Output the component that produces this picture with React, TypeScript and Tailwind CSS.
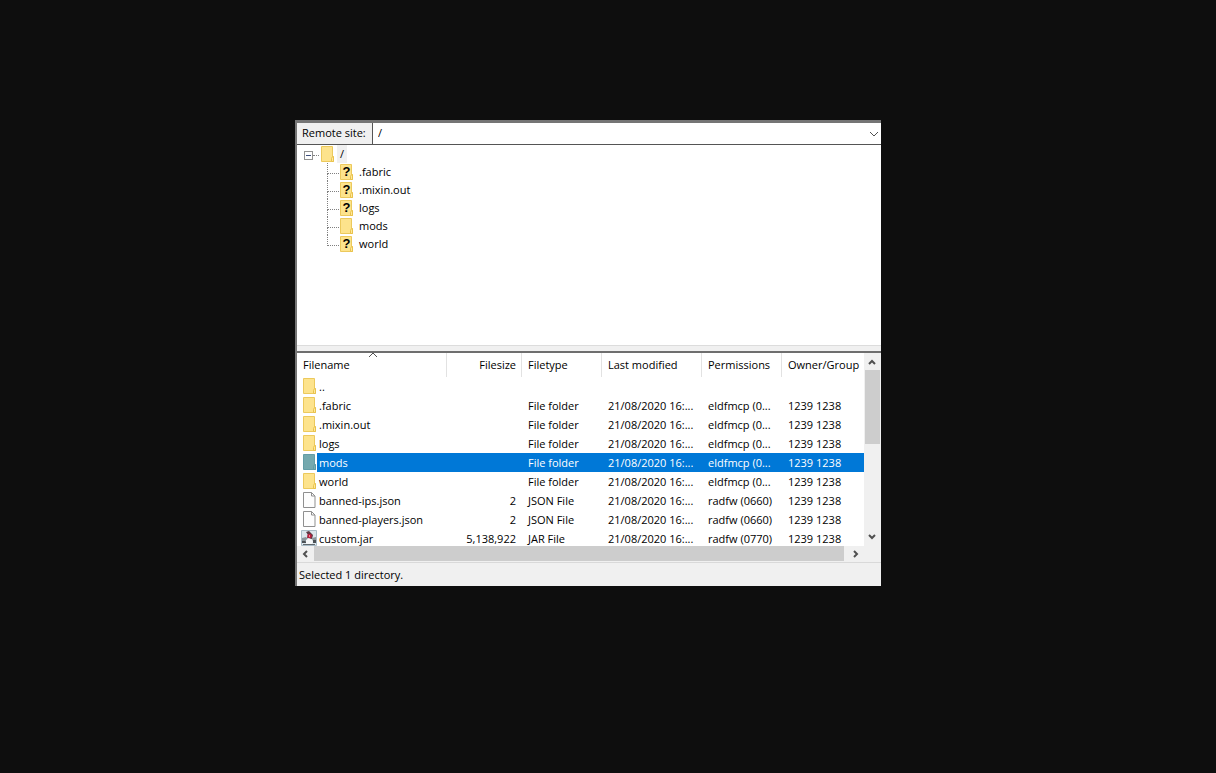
import React from "react";
import clsx from "clsx";

type IconKind = "folder" | "file" | "jar";

interface RemoteFile {
  name: string;
  icon: IconKind;
  size?: string;
  type?: string;
  modified?: string;
  permissions?: string;
  owner?: string;
}

const MODIFIED = "21/08/2020 16:...";
const OWNER = "1239 1238";

const folder = (name: string): RemoteFile => ({
  name,
  icon: "folder",
  type: "File folder",
  modified: MODIFIED,
  permissions: "eldfmcp (0...",
  owner: OWNER,
});

const files: RemoteFile[] = [
  { name: "..", icon: "folder" },
  folder(".fabric"),
  folder(".mixin.out"),
  folder("logs"),
  folder("mods"),
  folder("world"),
  { name: "banned-ips.json", icon: "file", size: "2", type: "JSON File", modified: MODIFIED, permissions: "radfw (0660)", owner: OWNER },
  { name: "banned-players.json", icon: "file", size: "2", type: "JSON File", modified: MODIFIED, permissions: "radfw (0660)", owner: OWNER },
  { name: "custom.jar", icon: "jar", size: "5,138,922", type: "JAR File", modified: MODIFIED, permissions: "radfw (0770)", owner: OWNER },
];

const tree = [
  { name: ".fabric", known: false },
  { name: ".mixin.out", known: false },
  { name: "logs", known: false },
  { name: "mods", known: true },
  { name: "world", known: false },
];

const columns = [
  { label: "Filename", width: "w-[150px]" },
  { label: "Filesize", width: "w-[75px]" },
  { label: "Filetype", width: "w-20" },
  { label: "Last modified", width: "w-[100px]" },
  { label: "Permissions", width: "w-20" },
  { label: "Owner/Group", width: "" },
];

const FolderIcon = ({ selected = false }: { selected?: boolean }) => (
  <svg width="13" height="16" viewBox="0 0 13 16" className="shrink-0" aria-hidden="true">
    <path d="M.5.5h11v9.5l1 1v4.5H.5z" fill={selected ? "#74a9ae" : "#fde38c"} stroke={selected ? "#639da6" : "#ecc95c"} />
    <path d="M12.5 10.5h-1l-1 2v3h2z" fill={selected ? "#7bb0b2" : "#ffe89a"} stroke={selected ? "#5f9aa4" : "#e9c24c"} />
  </svg>
);

const FileIcon = () => (
  <svg width="13" height="16" viewBox="0 0 13 16" className="shrink-0" aria-hidden="true">
    <path d="M.5.5h8l3.5 3.5v11.5H.5z" fill="#fdfdfd" stroke="#8f8f8f" />
    <path d="M8.5.5V4H12" fill="none" stroke="#8f8f8f" />
  </svg>
);

const JarIcon = () => (
  <svg width="16" height="16" viewBox="0 0 16 16" className="-ml-0.5 -mr-px shrink-0" aria-hidden="true">
    <path d="M.5.5h15v15H.5z" fill="#dce6ec" stroke="#a9bcc7" />
    <path d="M5 2l3-1 4 4-1 4-5-1 1-3z" fill="#5b3a45" />
    <path d="M1 8l4-1 2 2-1 3-5 1z" fill="#8b959b" />
    <path d="M11 8l4-1v6l-3-1z" fill="#8b959b" />
    <path d="M1 11h3l2 2H1zM12 10h3v3h-3z" fill="#4b5054" />
    <path d="M5 10l3-2 4 3-1 3H5z" fill="#f5f7f8" />
    <circle cx="8.5" cy="6" r="2.3" fill="#bb1f3e" />
    <path d="M8 5h1v2H8z" fill="#e98a9b" />
    <path d="M2 14h12v1H2z" fill="#60686d" />
  </svg>
);

const Arrow = ({ d, thin = false }: { d: string; thin?: boolean }) => (
  <svg width="10" height="10" viewBox="0 0 10 10" aria-hidden="true">
    <path d={d} fill="none" stroke="#505050" strokeWidth={thin ? 1 : 2} />
  </svg>
);

const RowIcon = ({ kind, selected }: { kind: IconKind; selected: boolean }) => {
  if (kind === "file") return <FileIcon />;
  if (kind === "jar") return <JarIcon />;
  return <FolderIcon selected={selected} />;
};

const AddressBar = () => (
  <div className="flex h-[22px] border-b border-[#555] bg-white">
    <label htmlFor="remote-site" className="w-[76px] border-r border-[#555] bg-[#f0f0f0] pl-[5px] leading-5 whitespace-nowrap">
      Remote site:
    </label>
    <input id="remote-site" defaultValue="/" className="min-w-0 flex-1 px-[5px] outline-none" />
    <button type="button" aria-label="Show recent paths" className="flex w-[15px] items-center justify-center">
      <Arrow d="M1 3l4 4 4-4" thin />
    </button>
  </div>
);

const DirectoryTree = () => (
  <div className="h-[201px] border-b border-[#dcdcdc] bg-white pl-[7px]">
    <div className="flex h-[18px] items-center">
      <button type="button" aria-label="Collapse" className="mt-0.5 flex size-[9px] items-center justify-center border border-[#919191]">
        <span className="h-px w-[5px] bg-[#3d4f7c]" />
      </button>
      <span className="mt-0.5 mr-0.5 w-1.5 border-t border-dotted border-[#808080]" />
      <FolderIcon />
      <span className="ml-[3px] bg-[#f0f0f0] px-[3px] leading-[18px]">/</span>
    </div>
    <ul className="pl-[23px]">
      {tree.map((item, i) => (
        <li key={item.name} className="flex h-[18px] items-center">
          <span className="mr-px flex h-full w-3 flex-col">
            <span className="h-[11px] border-b border-l border-dotted border-[#808080]" />
            {i < tree.length - 1 && <span className="flex-1 border-l border-dotted border-[#808080]" />}
          </span>
          <span className="relative flex">
            <FolderIcon />
            {!item.known && (
              <span className="absolute inset-0 text-center font-['Liberation_Sans',sans-serif] text-[13px] leading-4 font-bold">
                ?
              </span>
            )}
          </span>
          <span className="pl-1.5 leading-[18px]">{item.name}</span>
        </li>
      ))}
    </ul>
  </div>
);

const FileTable = () => (
  <table className="w-full table-fixed border-separate border-spacing-0">
    <thead>
      <tr className="h-6">
        {columns.map((col, i) => (
          <th
            key={col.label}
            className={clsx(
              "relative p-0 pl-1.5 font-normal whitespace-nowrap",
              col.width,
              i === 1 ? "pr-[5px] text-right" : "text-left",
              i < columns.length - 1 && "border-r border-[#e2e2e2]"
            )}
          >
            {col.label}
            {i === 0 && (
              <span className="absolute -top-0.5 left-[71px]">
                <Arrow d="M1 6l4-4 4 4" thin />
              </span>
            )}
          </th>
        ))}
      </tr>
    </thead>
    <tbody>
      {files.map((file) => {
        const selected = file.name === "mods";
        const cell = clsx("p-0 pl-1.5 leading-[19px] whitespace-nowrap", selected && "bg-[#0078d7] text-white");
        return (
          <tr key={file.name} className="h-[19px]">
            <td className="p-0 pl-1.5">
              <div className="flex h-[19px]">
                <span className="flex pt-px">
                  <RowIcon kind={file.icon} selected={selected} />
                </span>
                <span
                  className={clsx("ml-px flex-1 pl-0.5 leading-[19px] whitespace-nowrap", selected && "bg-[#0078d7] text-white")}
                >
                  {file.name}
                </span>
              </div>
            </td>
            <td className={clsx(cell, "pr-1.5 text-right")}>{file.size}</td>
            <td className={cell}>{file.type}</td>
            <td className={cell}>{file.modified}</td>
            <td className={cell}>{file.permissions}</td>
            <td className={cell}>{file.owner}</td>
          </tr>
        );
      })}
    </tbody>
  </table>
);

const FileList = () => (
  <div className="border-t-2 border-[#6e6e6e] bg-[#f0f0f0]">
    <div className="flex h-[193px]">
      <div className="min-w-0 flex-1 overflow-hidden bg-white">
        <FileTable />
      </div>
      <div className="flex w-[17px] flex-col pr-px">
        <button type="button" aria-label="Scroll up" className="flex h-[17px] items-center justify-center">
          <Arrow d="M2 7l3-3 3 3" />
        </button>
        <div className="ml-px h-[74px] bg-[#cdcdcd]" />
        <div className="flex-1" />
        <button type="button" aria-label="Scroll down" className="flex h-[17px] items-center justify-center">
          <Arrow d="M2 2l3 3 3-3" />
        </button>
      </div>
    </div>
    <div className="flex h-4 pr-[17px]">
      <button type="button" aria-label="Scroll left" className="flex w-[17px] items-center justify-center">
        <Arrow d="M6 2L3 5l3 3" />
      </button>
      <div className="mb-px flex-1 bg-[#cdcdcd]" />
      <button type="button" aria-label="Scroll right" className="flex w-5 items-center justify-center">
        <Arrow d="M5 2l3 3-3 3" />
      </button>
    </div>
  </div>
);

export default function App() {
  return (
    <main className="min-h-screen bg-[#0e0e0e] pt-[120px] pr-[335px] pl-[295px] font-['Open_Sans','Noto_Sans',sans-serif] text-[11px] text-black">
      <section className="border-t-3 border-l-2 border-[#757575] bg-[#f0f0f0]">
        <AddressBar />
        <DirectoryTree />
        <div className="h-[5px]" />
        <FileList />
        <footer className="h-6 border-t border-[#d9d9d9] pl-0.5 leading-[23px]">Selected 1 directory.</footer>
      </section>
    </main>
  );
}
